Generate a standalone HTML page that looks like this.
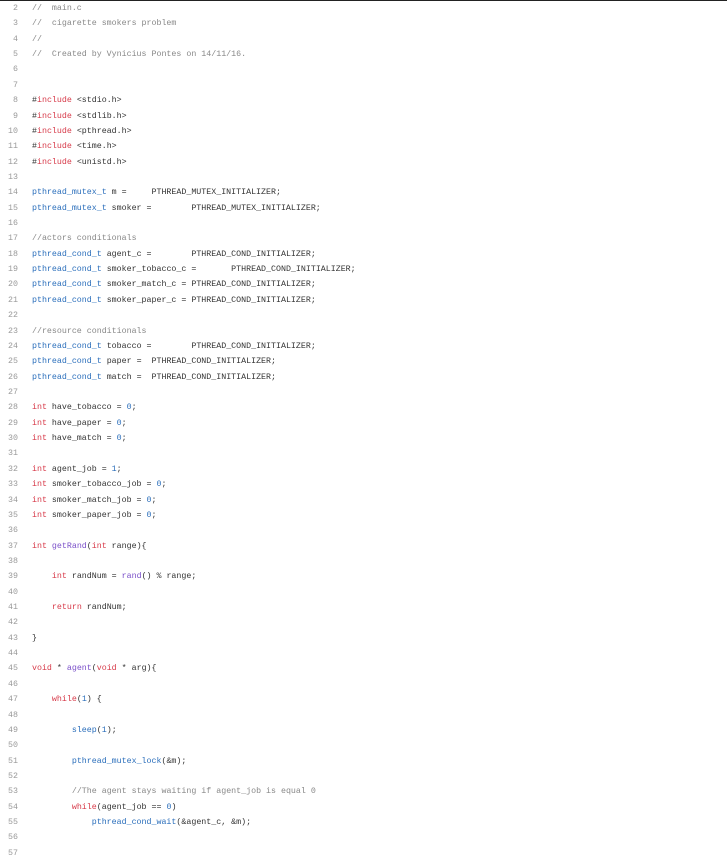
<!DOCTYPE html>
<html><head><meta charset="utf-8"><style>
html,body{margin:0;padding:0;background:#fff;width:727px;height:863px;overflow:hidden}
body{border-top:1px solid #222;box-sizing:border-box}
.w{position:relative;font-family:"Liberation Mono",monospace;font-size:8.3px;line-height:15.36px;color:#333}
.l{height:15.36px;white-space:pre}
.n{display:inline-block;width:18px;text-align:right;color:#999;margin-right:14px}
.c{color:#888}.k{color:#d73a49}.t{color:#2a6ebb}.f{color:#7a4fc9}.m{color:#2a6ebb}
</style></head><body><div class="w">
<div class="l"><span class="n">2</span><span class="c">//  main.c</span></div>
<div class="l"><span class="n">3</span><span class="c">//  cigarette smokers problem</span></div>
<div class="l"><span class="n">4</span><span class="c">//</span></div>
<div class="l"><span class="n">5</span><span class="c">//  Created by Vynicius Pontes on 14/11/16.</span></div>
<div class="l"><span class="n">6</span></div>
<div class="l"><span class="n">7</span></div>
<div class="l"><span class="n">8</span>#<span class="k">include</span> &lt;stdio.h&gt;</div>
<div class="l"><span class="n">9</span>#<span class="k">include</span> &lt;stdlib.h&gt;</div>
<div class="l"><span class="n">10</span>#<span class="k">include</span> &lt;pthread.h&gt;</div>
<div class="l"><span class="n">11</span>#<span class="k">include</span> &lt;time.h&gt;</div>
<div class="l"><span class="n">12</span>#<span class="k">include</span> &lt;unistd.h&gt;</div>
<div class="l"><span class="n">13</span></div>
<div class="l"><span class="n">14</span><span class="t">pthread_mutex_t</span> m =     PTHREAD_MUTEX_INITIALIZER;</div>
<div class="l"><span class="n">15</span><span class="t">pthread_mutex_t</span> smoker =        PTHREAD_MUTEX_INITIALIZER;</div>
<div class="l"><span class="n">16</span></div>
<div class="l"><span class="n">17</span><span class="c">//actors conditionals</span></div>
<div class="l"><span class="n">18</span><span class="t">pthread_cond_t</span> agent_c =        PTHREAD_COND_INITIALIZER;</div>
<div class="l"><span class="n">19</span><span class="t">pthread_cond_t</span> smoker_tobacco_c =       PTHREAD_COND_INITIALIZER;</div>
<div class="l"><span class="n">20</span><span class="t">pthread_cond_t</span> smoker_match_c = PTHREAD_COND_INITIALIZER;</div>
<div class="l"><span class="n">21</span><span class="t">pthread_cond_t</span> smoker_paper_c = PTHREAD_COND_INITIALIZER;</div>
<div class="l"><span class="n">22</span></div>
<div class="l"><span class="n">23</span><span class="c">//resource conditionals</span></div>
<div class="l"><span class="n">24</span><span class="t">pthread_cond_t</span> tobacco =        PTHREAD_COND_INITIALIZER;</div>
<div class="l"><span class="n">25</span><span class="t">pthread_cond_t</span> paper =  PTHREAD_COND_INITIALIZER;</div>
<div class="l"><span class="n">26</span><span class="t">pthread_cond_t</span> match =  PTHREAD_COND_INITIALIZER;</div>
<div class="l"><span class="n">27</span></div>
<div class="l"><span class="n">28</span><span class="k">int</span> have_tobacco = <span class="m">0</span>;</div>
<div class="l"><span class="n">29</span><span class="k">int</span> have_paper = <span class="m">0</span>;</div>
<div class="l"><span class="n">30</span><span class="k">int</span> have_match = <span class="m">0</span>;</div>
<div class="l"><span class="n">31</span></div>
<div class="l"><span class="n">32</span><span class="k">int</span> agent_job = <span class="m">1</span>;</div>
<div class="l"><span class="n">33</span><span class="k">int</span> smoker_tobacco_job = <span class="m">0</span>;</div>
<div class="l"><span class="n">34</span><span class="k">int</span> smoker_match_job = <span class="m">0</span>;</div>
<div class="l"><span class="n">35</span><span class="k">int</span> smoker_paper_job = <span class="m">0</span>;</div>
<div class="l"><span class="n">36</span></div>
<div class="l"><span class="n">37</span><span class="k">int</span> <span class="f">getRand</span>(<span class="k">int</span> range){</div>
<div class="l"><span class="n">38</span></div>
<div class="l"><span class="n">39</span>    <span class="k">int</span> randNum = <span class="f">rand</span>() % range;</div>
<div class="l"><span class="n">40</span></div>
<div class="l"><span class="n">41</span>    <span class="k">return</span> randNum;</div>
<div class="l"><span class="n">42</span></div>
<div class="l"><span class="n">43</span>}</div>
<div class="l"><span class="n">44</span></div>
<div class="l"><span class="n">45</span><span class="k">void</span> * <span class="f">agent</span>(<span class="k">void</span> * arg){</div>
<div class="l"><span class="n">46</span></div>
<div class="l"><span class="n">47</span>    <span class="k">while</span>(<span class="m">1</span>) {</div>
<div class="l"><span class="n">48</span></div>
<div class="l"><span class="n">49</span>        <span class="t">sleep</span>(<span class="m">1</span>);</div>
<div class="l"><span class="n">50</span></div>
<div class="l"><span class="n">51</span>        <span class="t">pthread_mutex_lock</span>(&amp;m);</div>
<div class="l"><span class="n">52</span></div>
<div class="l"><span class="n">53</span>        <span class="c">//The agent stays waiting if agent_job is equal 0</span></div>
<div class="l"><span class="n">54</span>        <span class="k">while</span>(agent_job == <span class="m">0</span>)</div>
<div class="l"><span class="n">55</span>            <span class="t">pthread_cond_wait</span>(&amp;agent_c, &amp;m);</div>
<div class="l"><span class="n">56</span></div>
<div class="l"><span class="n">57</span></div>
</div></body></html>
